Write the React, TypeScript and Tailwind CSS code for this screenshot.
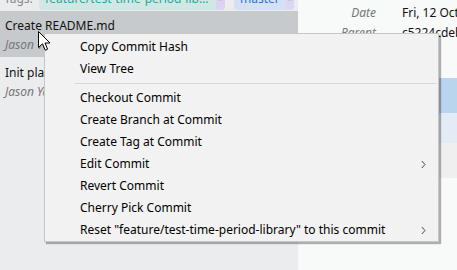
import React from "react";

const font = { fontFamily: '"Noto Sans", "Open Sans", sans-serif' };

function Chevron() {
  return (
    <svg width="5" height="9" viewBox="0 0 5 9" className="shrink-0">
      <path d="M0.8 1 L4 4.5 L0.8 8" fill="none" stroke="#444" strokeWidth="1" />
    </svg>
  );
}

function Item({ label, sub }: { label: string; sub?: boolean }) {
  return (
    <div className="flex h-[22px] items-center justify-between pl-[35px] pr-[12px] text-[12px] text-black">
      <span className="whitespace-nowrap">{label}</span>
      {sub && <Chevron />}
    </div>
  );
}

export default function App() {
  return (
    <div className="relative flex h-[270px] w-[457px] overflow-hidden" style={font}>
      {/* left pane */}
      <div className="flex w-[298px] shrink-0 flex-col bg-[#ebecee]">
        <div className="h-[11px] overflow-hidden">
          <div className="-mt-[12px] flex h-[22px] items-center gap-[9px] pl-[4px] text-[12px]">
            <span className="w-[26px] text-[#888]">Tags:</span>
            <div className="flex h-[22px] w-[186px] items-center overflow-hidden rounded-[4px] bg-[#d0e8e5]">
              <span className="flex-1 truncate px-[6px] text-[#2aa59b]">feature/test-time-period-library</span>
              <span className="flex h-full w-[9px] items-center justify-center bg-[#dcd4ee] text-[8px] text-[#a27de0]">×</span>
            </div>
            <div className="flex h-[22px] w-[60px] items-center overflow-hidden rounded-[4px] bg-[#d4e1f5]">
              <span className="flex-1 px-[6px] text-[#2f6fd6]">master</span>
              <span className="flex h-full w-[8px] items-center justify-center bg-[#ddd5f2] text-[8px] text-[#a27de0]">×</span>
            </div>
          </div>
        </div>
        <div className="flex h-[46px] flex-col bg-[#c7cacd] pl-[5px] pt-[6px]">
          <span className="text-[12px] leading-[17px] text-[#111]">Create README.md</span>
          <span className="mt-[2px] text-[12px] italic leading-[17px] text-[#777]">Jason Yang</span>
        </div>
        <div className="flex h-[46px] flex-col pl-[5px] pt-[7px]">
          <span className="text-[12px] leading-[17px] text-[#111]">Init playground</span>
          <span className="mt-[2px] text-[12px] italic leading-[17px] text-[#777]">Jason Yang</span>
        </div>
      </div>
      {/* right pane */}
      <div className="flex flex-1 flex-col bg-[#f8f9f9]">
        <div className="flex h-[22px] items-end text-[12px]">
          <span className="w-[78px] text-right italic text-[#777]">Date</span>
          <span className="ml-[26px] whitespace-nowrap text-[#111]">Fri, 12 Oct 2018</span>
        </div>
        <div className="flex h-[22px] items-center text-[12px]">
          <span className="w-[78px] text-right italic text-[#777]">Parent</span>
          <span className="ml-[26px] whitespace-nowrap text-[#111]">c5224cdeb</span>
        </div>
        <div className="h-[34px]" />
        <div className="h-[35px] bg-[#b9d4ed]" />
        <div className="h-[30px] bg-[#e3ebf6]" />
        <div className="h-[35px] bg-[#efefef]" />
      </div>

      {/* context menu */}
      <div className="absolute left-[44px] top-[33px] w-[395px] border border-[#c6c6c6] bg-[#f2f2f2] pt-[2px] shadow-[2px_2px_1px_rgba(0,0,0,0.3)]">
        <Item label="Copy Commit Hash" />
        <Item label="View Tree" />
        <div className="my-[3px] ml-[30px] mr-[2px] h-px bg-[#d7d7d7]" />
        <Item label="Checkout Commit" />
        <Item label="Create Branch at Commit" />
        <Item label="Create Tag at Commit" />
        <Item label="Edit Commit" sub />
        <Item label="Revert Commit" />
        <Item label="Cherry Pick Commit" />
        <Item label={'Reset "feature/test-time-period-library" to this commit'} sub />
      </div>

      {/* cursor */}
      <svg className="absolute left-[38px] top-[31px]" width="13" height="21" viewBox="0 0 13 21">
        <path d="M0.5 0.5 L0.5 16.5 L4.5 12.8 L7.2 19.2 L9.6 18.2 L7 12 L12 12 Z" fill="#fff" stroke="#000" strokeWidth="1" strokeLinejoin="miter" />
      </svg>
    </div>
  );
}
